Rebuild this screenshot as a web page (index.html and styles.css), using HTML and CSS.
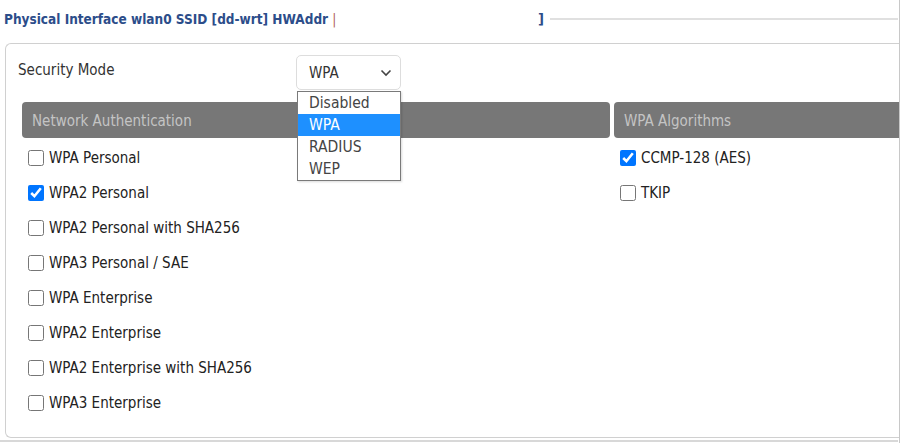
FILE: index.html
```html
<!DOCTYPE html>
<html lang="en">
<head>
  <meta charset="UTF-8">
  <meta name="viewport" content="width=device-width, initial-scale=1.0">
  <title>Wireless Security</title>
  <link rel="stylesheet" href="styles.css">
</head>
<body>
<div class="page">
  <div class="legend">
    <span class="title">Physical Interface wlan0 SSID [dd-wrt] HWAddr <span class="caret">|</span></span>
    <span class="bracket">]</span>
    <span class="rule"></span>
  </div>
  <div class="box">
    <div class="row">
      <span class="label">Security Mode</span>
      <div class="select">
        <span>WPA</span>
        <svg class="chev" width="12" height="8" viewBox="0 0 12 8"><path d="M1.5 1.5 L6 6 L10.5 1.5" fill="none" stroke="#444" stroke-width="1.6"/></svg>
        <ul class="options">
          <li>Disabled</li>
          <li class="sel">WPA</li>
          <li>RADIUS</li>
          <li>WEP</li>
        </ul>
      </div>
    </div>
    <div class="cols">
      <div class="col col-auth">
        <div class="head">Network Authentication</div>
        <label class="check"><input type="checkbox"> WPA Personal</label>
        <label class="check"><input type="checkbox" checked> WPA2 Personal</label>
        <label class="check"><input type="checkbox"> WPA2 Personal with SHA256</label>
        <label class="check"><input type="checkbox"> WPA3 Personal / SAE</label>
        <label class="check"><input type="checkbox"> WPA Enterprise</label>
        <label class="check"><input type="checkbox"> WPA2 Enterprise</label>
        <label class="check"><input type="checkbox"> WPA2 Enterprise with SHA256</label>
        <label class="check"><input type="checkbox"> WPA3 Enterprise</label>
      </div>
      <div class="col col-alg">
        <div class="head">WPA Algorithms</div>
        <label class="check"><input type="checkbox" checked> CCMP-128 (AES)</label>
        <label class="check"><input type="checkbox"> TKIP</label>
      </div>
    </div>
  </div>
  <div class="bottom"></div>
</div>
</body>
</html>
```

FILE: styles.css
```css
body {
  margin: 0;
  background-color: white;
  font-family: "DejaVu Sans Condensed", "DejaVu Sans", sans-serif;
  overflow: hidden;
}
.page {
  width: 900px;
  height: 443px;
  box-sizing: border-box;
  border-right: 1px solid #c8c8c8;
}
.legend {
  height: 38px;
  display: flex;
  align-items: center;
  padding-left: 4px;
}
.title {
  font-weight: bold;
  font-size: 13.5px;
  color: #2c4d8a;
  width: 534px;
}
.caret {
  font-weight: normal;
  color: #b06060;
}
.bracket {
  font-weight: bold;
  font-size: 14.5px;
  color: #2c4d8a;
}
.rule {
  flex: 1;
  margin-left: 6px;
  margin-right: 1px;
  border-top: 2px solid #e0e0e0;
}
.box {
  margin: 5px 0 0 5px;
  border: 1px solid #d0d0d0;
  border-right: none;
  border-radius: 6px 0 0 6px;
  padding: 11px 0 17px 12px;
}
.row {
  display: flex;
  align-items: center;
  height: 35px;
}
.label {
  width: 278px;
  font-size: 15px;
  color: #333333;
  margin-top: -5px;
}
.select {
  position: relative;
  width: 105px;
  height: 35px;
  box-sizing: border-box;
  border: 1px solid #dddddd;
  border-radius: 5px;
  padding: 0 8px 0 12px;
  display: flex;
  align-items: center;
  justify-content: space-between;
  font-size: 15px;
  color: #333333;
}
.options {
  position: absolute;
  top: 35px;
  left: 0;
  width: 104px;
  box-sizing: border-box;
  margin: 0;
  padding: 0;
  list-style: none;
  background-color: white;
  border: 1px solid #7a7a7a;
  box-shadow: 1px 1px 2px rgba(0, 0, 0, 0.15);
  z-index: 2;
}
.options li {
  height: 22px;
  line-height: 22px;
  padding-left: 11px;
  font-size: 15.5px;
  color: #444444;
}
.options li.sel {
  background-color: #1e90ff;
  color: white;
}
.cols {
  display: flex;
  gap: 4px;
  margin-top: 12px;
  margin-left: 4px;
}
.col-auth {
  width: 588px;
}
.col-alg {
  flex: 1;
}
.head {
  height: 36px;
  box-sizing: border-box;
  padding: 2px 0 0 10px;
  line-height: 34px;
  background-color: #777777;
  color: #c4c4c4;
  font-size: 15px;
  border-radius: 4px;
  margin-bottom: 2px;
}
.col-alg .head {
  border-radius: 4px 0 0 4px;
}
.check {
  display: flex;
  align-items: center;
  height: 35px;
  font-size: 15px;
  color: #222222;
}
.check input {
  width: 16px;
  height: 16px;
  margin: 0 5px 0 6px;
}
.bottom {
  margin-top: 2px;
  border-top: 2px solid #d8d8d8;
  margin-right: 1px;
}
```
